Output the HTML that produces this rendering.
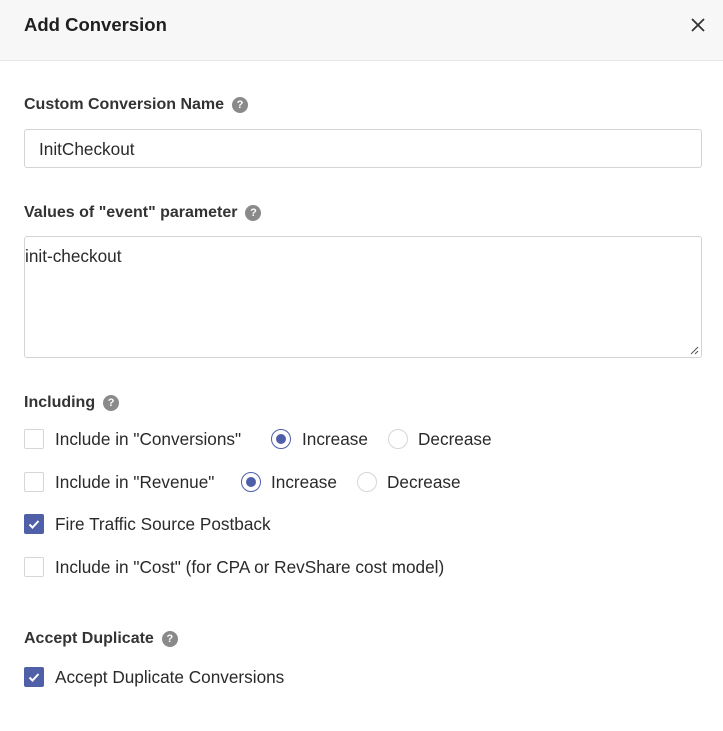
<!DOCTYPE html>
<html><head><style>
*{box-sizing:border-box;margin:0;padding:0}
body{width:723px;height:731px;background:#fff;font-family:"Liberation Sans",Arial,sans-serif;color:#222;position:relative;overflow:hidden}
.hdr{position:absolute;left:0;top:0;width:723px;height:61px;background:#f7f7f7;border-bottom:1px solid #e6e6e6}
.t{position:absolute;white-space:nowrap}
.title{left:24px;top:14px;font-size:18.5px;font-weight:bold;color:#1f1f1f}
.lbl{font-size:16px;font-weight:bold;color:#333}
.txt{font-size:17.2px;color:#2a2a2a}
.q{display:inline-block;width:16px;height:16px;border-radius:50%;background:#8a8a8a;color:#fff;font-size:11px;font-weight:bold;text-align:center;line-height:16px;vertical-align:1px;margin-left:8px}
.box{position:absolute;border:1px solid #d4d4d4;border-radius:3px}
.cb{position:absolute;width:20px;height:20px;border:1px solid #d6d6d6;border-radius:2px;background:#fff}
.cb.on{background:#4f5fa8;border-color:#4f5fa8}
.rd{position:absolute;width:20px;height:20px;border:1px solid #d6d6d6;border-radius:50%}
.rd.on{border-color:#4f5fa8}
.rd.on::after{content:"";position:absolute;left:4px;top:4px;width:10px;height:10px;border-radius:50%;background:#4f5fa8}
</style></head><body>
<div class="hdr"></div>
<div class="t title">Add Conversion</div>
<svg style="position:absolute;left:690px;top:17px" width="16" height="16" viewBox="0 0 16 16"><path d="M2 2L14 14M14 2L2 14" stroke="#333" stroke-width="1.8"/></svg>

<div class="t lbl" style="left:24px;top:96px">Custom Conversion Name<span class="q">?</span></div>
<div class="box" style="left:24px;top:129px;width:678px;height:39px"></div>
<div class="t txt" style="left:39px;top:139px">InitCheckout</div>

<div class="t lbl" style="left:24px;top:204px">Values of "event" parameter<span class="q">?</span></div>
<div class="box" style="left:24px;top:236px;width:678px;height:122px"></div>
<div class="t txt" style="left:25px;top:246px">init-checkout</div>
<svg style="position:absolute;left:690px;top:346px" width="9" height="9"><path d="M1 8L8 1M5 8L8 5" stroke="#555" stroke-width="1"/></svg>

<div class="t lbl" style="left:24px;top:394px">Including<span class="q">?</span></div>

<div class="cb" style="left:24px;top:429px"></div>
<div class="t txt" style="left:55px;top:429px">Include in "Conversions"</div>
<div class="rd on" style="left:271px;top:429px"></div>
<div class="t txt" style="left:302px;top:429px">Increase</div>
<div class="rd" style="left:388px;top:429px"></div>
<div class="t txt" style="left:418px;top:429px">Decrease</div>

<div class="cb" style="left:24px;top:472px"></div>
<div class="t txt" style="left:55px;top:472px">Include in "Revenue"</div>
<div class="rd on" style="left:241px;top:472px"></div>
<div class="t txt" style="left:271px;top:472px">Increase</div>
<div class="rd" style="left:357px;top:472px"></div>
<div class="t txt" style="left:387px;top:472px">Decrease</div>

<div class="cb on" style="left:24px;top:514px"><svg width="18" height="18" viewBox="0 0 18 18"><path d="M4.5 9.5L7.5 12.5L13.5 6" fill="none" stroke="#fff" stroke-width="2"/></svg></div>
<div class="t txt" style="left:55px;top:514px">Fire Traffic Source Postback</div>

<div class="cb" style="left:24px;top:557px"></div>
<div class="t txt" style="left:55px;top:557px">Include in "Cost" (for CPA or RevShare cost model)</div>

<div class="t lbl" style="left:24px;top:630px">Accept Duplicate<span class="q">?</span></div>
<div class="cb on" style="left:24px;top:667px"><svg width="18" height="18" viewBox="0 0 18 18"><path d="M4.5 9.5L7.5 12.5L13.5 6" fill="none" stroke="#fff" stroke-width="2"/></svg></div>
<div class="t txt" style="left:55px;top:667px">Accept Duplicate Conversions</div>
</body></html>
